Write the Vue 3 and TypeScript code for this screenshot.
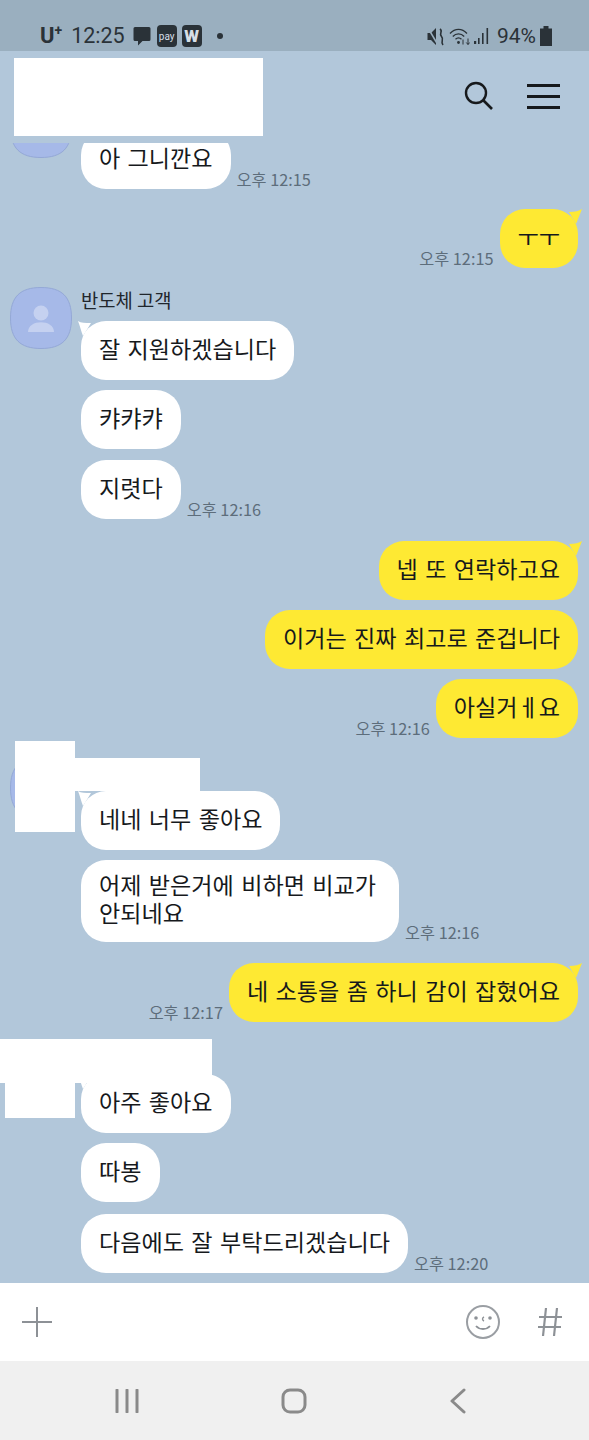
<script setup lang="ts">
interface Message {
  id: number
  side: 'in' | 'out'
  lines: string[]
  top: number
  time?: string
  name?: string
  avatar?: boolean
  tail?: boolean
}

const messages: Message[] = [
  { id: 1, side: 'in', lines: ['아 그니깐요'], top: -47, time: '오후 12:15', name: ' ', avatar: true },
  { id: 2, side: 'out', lines: ['ㅜㅜ'], top: 20, time: '오후 12:15', tail: true },
  { id: 3, side: 'in', lines: ['잘 지원하겠습니다'], top: 19, name: '반도체 고객', avatar: true, tail: true },
  { id: 4, side: 'in', lines: ['캬캬캬'], top: 10 },
  { id: 5, side: 'in', lines: ['지렷다'], top: 11, time: '오후 12:16' },
  { id: 6, side: 'out', lines: ['넵 또 연락하고요'], top: 22, tail: true },
  { id: 7, side: 'out', lines: ['이거는 진짜 최고로 준겁니다'], top: 10 },
  { id: 8, side: 'out', lines: ['아실거ㅔ요'], top: 10, time: '오후 12:16' },
  { id: 9, side: 'in', lines: ['네네 너무 좋아요'], top: 19, name: ' ', avatar: true, tail: true },
  { id: 10, side: 'in', lines: ['어제 받은거에 비하면 비교가', '안되네요'], top: 10, time: '오후 12:16' },
  { id: 11, side: 'out', lines: ['네 소통을 좀 하니 감이 잡혔어요'], top: 21, time: '오후 12:17', tail: true },
  { id: 12, side: 'in', lines: ['아주 좋아요'], top: 18, name: ' ', avatar: true, tail: true },
  { id: 13, side: 'in', lines: ['따봉'], top: 10 },
  { id: 14, side: 'in', lines: ['다음에도 잘 부탁드리겠습니다'], top: 12, time: '오후 12:20' },
]
</script>

<template>
  <div class="phone">
    <div class="status">
      <div class="status-left">
        <span class="carrier">U<sup>+</sup></span>
        <span class="clock">12:25</span>
        <svg class="ico" width="18" height="20" viewBox="0 0 18 20">
          <path d="M2 1h14a1.500 1.500 0 0 1 1.500 1.500v11a1.500 1.500 0 0 1-1.500 1.500H9.500L5 19.500V15H2a1.500 1.500 0 0 1-1.500-1.500v-11A1.500 1.500 0 0 1 2 1z" fill="#2a3238" />
        </svg>
        <span class="badge pay">pay</span>
        <span class="badge wcard">W</span>
        <span class="dot"></span>
      </div>
      <div class="status-right">
        <svg width="18" height="19" viewBox="0 0 18 19">
          <path d="M0.500 6h3.500l5-5v17l-5-5H0.500z" fill="#2a3238" />
          <path d="M1 1l10 17" stroke="#9aafbf" stroke-width="1.500" />
          <path d="M13 2c3.500 2.500-1.500 4 1.500 7.500S13 14 16 18" fill="none" stroke="#2a3238" stroke-width="1.600" />
        </svg>
        <svg width="21" height="19" viewBox="0 0 21 19">
          <g fill="none" stroke="#2a3238" stroke-width="1.300">
            <path d="M1 6.500c5-5.500 12-5.500 17 0" />
            <path d="M3.800 9.500c3.300-3.500 8.100-3.500 11.400 0" />
            <path d="M6.500 12.300c1.900-1.900 4.100-1.900 6 0" />
          </g>
          <circle cx="9.500" cy="15.500" r="1.400" fill="#2a3238" />
          <path d="M14 12.500v5M19 11.500v6M17.300 15.500l1.700 2 1.700-2" stroke="#2a3238" stroke-width="1" fill="none" />
        </svg>
        <svg width="15" height="18" viewBox="0 0 15 18">
          <rect x="0" y="14" width="2.200" height="3" fill="#2a3238" />
          <rect x="4" y="11" width="1.600" height="6" fill="#2a3238" />
          <rect x="8" y="6" width="1.600" height="11" fill="#2a3238" />
          <rect x="12.500" y="1" width="1.600" height="16" fill="#2a3238" />
        </svg>
        <span class="battery-label">94%</span>
        <svg width="12" height="20" viewBox="0 0 12 20">
          <path d="M3.500 0h5v2.500H12V20H0V2.500h3.500z" fill="#2a3238" />
        </svg>
      </div>
    </div>

    <div class="chat">
      <header class="topbar">
        <svg width="30" height="30" viewBox="0 0 30 30">
          <circle cx="12" cy="12" r="10" fill="none" stroke="#16191c" stroke-width="2.400" />
          <path d="M19 19l9 9" stroke="#16191c" stroke-width="2.600" />
        </svg>
        <div class="menu"><i></i><i></i><i></i></div>
      </header>

      <div class="list">
        <div
          v-for="m in messages"
          :key="m.id"
          class="row"
          :class="m.side"
          :style="{ marginTop: m.top + 'px' }"
        >
          <div v-if="m.side === 'in'" class="avatar-col">
            <svg v-if="m.avatar" class="avatar" width="62" height="62" viewBox="0 0 62 62">
              <path d="M31 .5C52 .5 61.500 10 61.500 31S52 61.500 31 61.500.5 52 .5 31 10 .5 31 .5z" fill="#a6b9e8" stroke="#94a8d6" />
              <circle cx="31" cy="26" r="7.500" fill="#c5d1f0" />
              <path d="M18 45c0-13 26-13 26 0z" fill="#c5d1f0" />
            </svg>
          </div>
          <div class="content">
            <div v-if="m.name" class="name">{{ m.name }}</div>
            <div class="line">
              <span v-if="m.time && m.side === 'out'" class="time">{{ m.time }}</span>
              <div class="bubble" :class="{ wrapped: m.lines.length > 1 }">
                <svg v-if="m.tail" class="tail" width="14" height="16" viewBox="0 0 14 16">
                  <path v-if="m.side === 'in'" d="M0 0c3 2 7 2 13 2L5 15C3 10 2 5 0 0z" fill="#fff" />
                  <path v-else d="M14 0c-3 2-7 3-13 3l7 12c2-5 4-10 6-15z" fill="#fee933" />
                </svg>
                <div>
                  <div v-for="l in m.lines" :key="l">{{ l }}</div>
                </div>
              </div>
              <span v-if="m.time && m.side === 'in'" class="time">{{ m.time }}</span>
            </div>
          </div>
        </div>
      </div>

      <div class="redact title"></div>
      <div class="redact r1"></div>
      <div class="redact r2"></div>
      <div class="redact r3"></div>
      <div class="redact r4"></div>
    </div>

    <div class="composer">
      <svg width="30" height="30" viewBox="0 0 30 30">
        <path d="M0 15h30M15 0v30" stroke="#8d9196" stroke-width="2" />
      </svg>
      <div class="composer-right">
        <svg width="36" height="36" viewBox="0 0 36 36">
          <circle cx="18" cy="18" r="16" fill="none" stroke="#9a9ea3" stroke-width="2" />
          <circle cx="11" cy="14" r="1.800" fill="#8d9196" />
          <circle cx="25" cy="14" r="1.800" fill="#8d9196" />
          <path d="M19 13c-2 1-2 3 0 4" fill="none" stroke="#8d9196" stroke-width="1.400" />
          <path d="M11 22c3.500 4 10.500 4 14 0" fill="none" stroke="#8d9196" stroke-width="1.800" />
        </svg>
        <svg width="26" height="32" viewBox="0 0 26 32">
          <path d="M9 2L6 30M20 2l-3 28M2 11h23M1 21h23" stroke="#8d9196" stroke-width="2.200" />
        </svg>
      </div>
    </div>

    <nav class="navbar">
      <svg width="24" height="24" viewBox="0 0 24 24">
        <path d="M2 1v22M12 1v22M22 1v22" stroke="#8a8a8a" stroke-width="3" stroke-linecap="round" />
      </svg>
      <svg width="26" height="26" viewBox="0 0 26 26">
        <rect x="2" y="2" width="22" height="22" rx="7" fill="none" stroke="#8a8a8a" stroke-width="3" />
      </svg>
      <svg width="18" height="26" viewBox="0 0 18 26">
        <path d="M15 2L3 13l12 11" fill="none" stroke="#8a8a8a" stroke-width="3" stroke-linecap="round" stroke-linejoin="round" />
      </svg>
    </nav>
  </div>
</template>

<style scoped>
.phone {
  width: 589px;
  height: 1440px;
  display: flex;
  flex-direction: column;
  overflow: hidden;
  font-family: "Noto Sans CJK KR", "Noto Sans", sans-serif;
  color: #16191c;
}

.status {
  height: 51px;
  flex: none;
  background: #9aafbf;
  display: flex;
  justify-content: space-between;
  align-items: center;
  padding: 21px 37px 0 40px;
  box-sizing: border-box;
  color: #2a3238;
  font-family: Roboto, "Noto Sans", sans-serif;
}
.status-left,
.status-right {
  display: flex;
  align-items: center;
}
.status-left { gap: 6px; }
.status-right { gap: 4px; }
.carrier {
  font-size: 22px;
  font-weight: 700;
  line-height: 24px;
  margin-right: 3px;
}
.carrier sup {
  font-size: 14px;
  line-height: 0;
  vertical-align: 8px;
}
.clock { font-size: 21.500px; line-height: 24px; margin-right: 2px; }
.badge {
  width: 20px;
  height: 22px;
  border-radius: 4px;
  background: #2a3238;
  color: #d6dfe6;
  display: flex;
  align-items: center;
  justify-content: center;
}
.pay { font-size: 10px; }
.wcard { font-size: 17px; font-weight: 900; margin-left: -1px; }
.dot {
  width: 6px;
  height: 6px;
  border-radius: 50%;
  background: #2a3238;
  margin-left: 9px;
}
.battery-label { font-size: 21px; line-height: 24px; margin-left: 4px; }

.chat {
  flex: 1;
  min-height: 0;
  position: relative;
  display: flex;
  flex-direction: column;
  background: #b2c7da;
}
.topbar {
  height: 92px;
  flex: none;
  display: flex;
  justify-content: flex-end;
  align-items: center;
  gap: 33px;
  padding: 0 29px 2px 0;
  box-sizing: border-box;
}
.menu {
  width: 33px;
  height: 25px;
  display: flex;
  flex-direction: column;
  justify-content: space-between;
}
.menu i {
  display: block;
  height: 3px;
  background: #16191c;
}

.list {
  flex: 1;
  min-height: 0;
  overflow: hidden;
  padding: 0 11px 0 10px;
}
.row { display: flex; }
.row.out { justify-content: flex-end; }
.avatar-col {
  width: 71px;
  flex: none;
}
.avatar { display: block; }
.name {
  height: 34px;
  font-size: 18.800px;
  line-height: 26px;
  color: #1f262c;
  white-space: pre;
}
.line {
  display: flex;
  align-items: flex-end;
  gap: 6px;
}
.bubble {
  position: relative;
  min-height: 59px;
  padding: 10px 18px 16px;
  box-sizing: border-box;
  display: flex;
  align-items: center;
  border-radius: 25px;
  background: #fff;
  font-size: 23.100px;
  word-spacing: 2.200px;
  line-height: 28px;
  white-space: nowrap;
}
.bubble.wrapped { padding-right: 23px; }
.out .bubble { background: #fee933; }
.tail { position: absolute; top: 0; }
.in .tail { left: -3px; }
.out .tail { right: -4px; }
.time {
  font-size: 16.300px;
  line-height: 18px;
  padding-bottom: 1px;
  color: #5d6d7b;
  white-space: nowrap;
}

.redact {
  position: absolute;
  background: #fff;
}
.title { left: 14px; top: 7px; width: 249px; height: 78px; }
.r1 { left: 15px; top: 690px; width: 60px; height: 91px; }
.r2 { left: 75px; top: 707px; width: 125px; height: 33px; }
.r3 { left: 0; top: 988px; width: 212px; height: 44px; }
.r4 { left: 5px; top: 1032px; width: 70px; height: 35px; }

.composer {
  height: 78px;
  flex: none;
  background: #fff;
  display: flex;
  align-items: center;
  justify-content: space-between;
  padding: 0 26px 0 22px;
  box-sizing: border-box;
}
.composer-right {
  display: flex;
  align-items: center;
  gap: 36px;
}
.navbar {
  height: 79px;
  flex: none;
  background: #f0f0f0;
  display: flex;
  align-items: center;
  justify-content: space-between;
  padding: 0 122px 0 115px;
  box-sizing: border-box;
}
</style>
